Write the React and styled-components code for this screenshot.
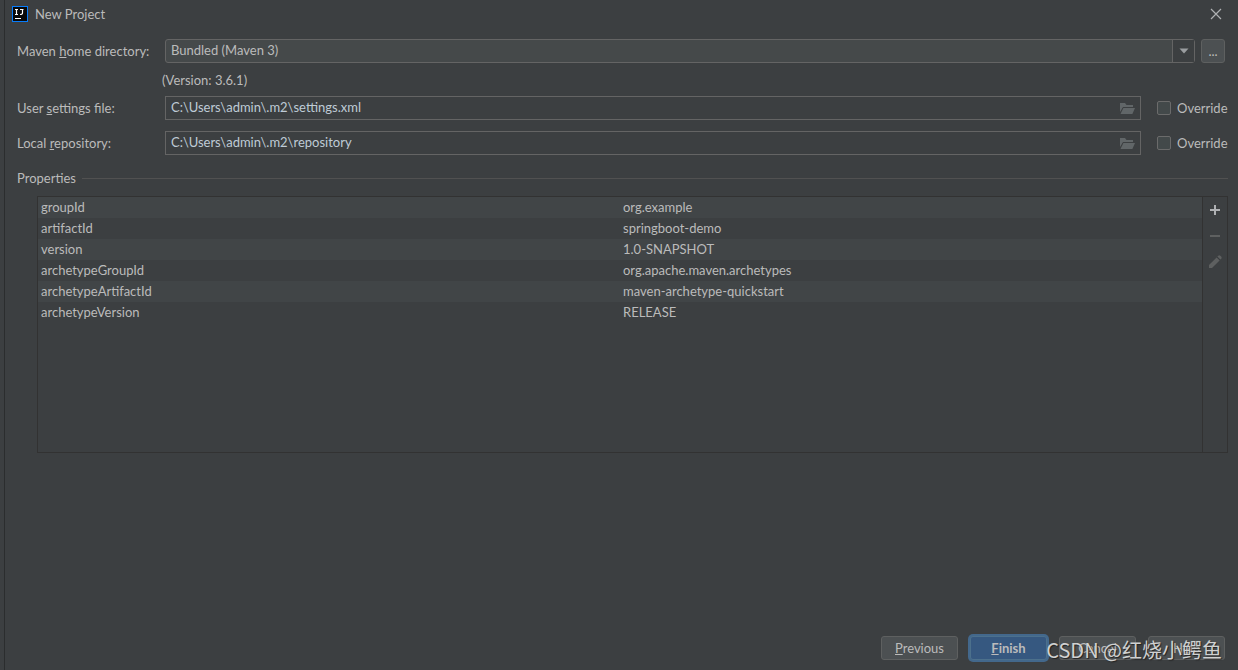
import React, {useState} from 'react';
import styled, {createGlobalStyle} from 'styled-components';

const GlobalStyle = createGlobalStyle`
  * {
    box-sizing: border-box;
  }

  body {
    margin: 0;
    background: #3c3f41;
    color: #bbbbbb;
    font: 13px/20px Lato, "Noto Sans CJK SC", sans-serif;
  }

  button, input, select {
    font: inherit;
    color: inherit;
  }
`;

const Dialog = styled.div`
  position: relative;
  display: flex;
  flex-direction: column;
  min-height: 100vh;
  margin-left: 4px;
  border-left: 1px solid #2b2d2e;
`;

const TitleBar = styled.header`
  display: flex;
  align-items: center;
  gap: 7px;
  height: 28px;
  padding: 0 14px 0 7px;
`;

const Title = styled.h1`
  flex: 1;
  margin: 0;
  font-size: 13px;
  font-weight: 400;
`;

const IconButton = styled.button`
  display: flex;
  padding: 0;
  border: 0;
  background: none;
  color: #afb1b3;

  &:disabled {
    color: #5e6060;
  }
`;

const Content = styled.main`
  flex: 1;
  padding: 11px 10px 0 12px;
`;

const FieldRow = styled.div`
  display: flex;
  align-items: center;
  height: 24px;
  margin-bottom: ${props => props.$gap || 11}px;
`;

const Label = styled.label`
  flex: 0 0 148px;
`;

const SelectBox = styled.div`
  display: grid;
  grid-template-columns: 1fr 22px;
  flex: 1;
  height: 24px;
  border: 1px solid #646464;
  border-radius: 3px;
  background: #45494a;
`;

const Select = styled.select`
  grid-area: 1 / 1 / 2 / 3;
  appearance: none;
  width: 100%;
  height: 22px;
  padding: 0 5px 2px;
  border: 0;
  outline: 0;
  background: none;
`;

const SelectArrow = styled.span`
  grid-area: 1 / 2 / 2 / 3;
  display: flex;
  align-items: center;
  justify-content: center;
  border-left: 1px solid #646464;
  background: #3c3f41;
  pointer-events: none;
`;

const Button = styled.button`
  width: 77px;
  height: 24px;
  padding: 0;
  border: 1px solid #5e6060;
  border-radius: 3px;
  background: #4c5052;
  line-height: 20px;
`;

const BrowseButton = styled(Button)`
  width: 24px;
  margin: 0 3px 0 6px;
`;

const DefaultButton = styled(Button)`
  border-color: #4c708c;
  background: #365880;
  box-shadow: 0 0 0 2px #43688c;
  font-weight: 700;
`;

const Version = styled.p`
  height: 20px;
  margin: 0 0 6px 145px;
`;

const PathBox = styled.div`
  display: flex;
  align-items: center;
  flex: 1;
  height: 24px;
  padding-right: 5px;
  border: 1px solid #646464;
  color: #616668;
`;

const PathInput = styled.input`
  flex: 1;
  min-width: 0;
  height: 22px;
  padding: 0 5px 2px;
  border: 0;
  outline: 0;
  background: none;
  color: #bfcbd6;
`;

const Override = styled.label`
  display: flex;
  align-items: center;
  gap: 6px;
  flex: 0 0 71px;
  margin-left: 16px;
`;

const CheckBox = styled.input`
  appearance: none;
  flex: none;
  width: 14px;
  height: 14px;
  margin: 0;
  border: 1px solid #6b6b6b;
  border-radius: 2px;
  background: #43494a;

  &:checked {
    background: #365880;
  }
`;

const SectionTitle = styled.h2`
  display: flex;
  align-items: center;
  gap: 6px;
  height: 20px;
  margin: 13px 0 8px;
  font-size: 13px;
  font-weight: 400;

  &::after {
    content: '';
    flex: 1;
    height: 1px;
    background: #515151;
  }
`;

const Panel = styled.section`
  display: flex;
  min-height: 257px;
  margin-left: 20px;
  border: 1px solid #323232;
`;

const TableArea = styled.div`
  flex: 1;
`;

const Table = styled.table`
  width: 100%;
  border-collapse: collapse;
  table-layout: fixed;

  tr:nth-child(odd) {
    background: #414547;
  }

  td {
    height: 21px;
    padding: 0 3px 1px;
  }
`;

const Toolbar = styled.div`
  display: flex;
  flex-direction: column;
  align-items: center;
  gap: 10px;
  width: 25px;
  padding-top: 5px;
  border-left: 1px solid #323232;
`;

const Footer = styled.footer`
  display: flex;
  justify-content: flex-end;
  gap: 12px;
  padding: 0 13px 10px;
`;

const Watermark = styled.div`
  position: absolute;
  right: 16px;
  bottom: 5px;
  color: #d0d1d1;
  font: 20px/30px "Noto Sans CJK SC", sans-serif;
  text-shadow: 1px 1px 1px #222222;
  pointer-events: none;
`;

function IdeaLogo() {
    return (
        <svg width="16" height="16" viewBox="0 0 16 16" aria-hidden="true">
            <rect x="0.5" y="0.5" width="15" height="15" fill="#080808" stroke="#087cfa"/>
            <path d="M3 3.5h3M4.5 3.5v5M3 8.5h3M8 3.5h3.5M10.5 3.5V7Q10.5 8.5 8 8.5" fill="none" stroke="#fff" strokeWidth="1.2"/>
            <path d="M3 12.5h6" stroke="#fff"/>
        </svg>
    );
}

function FolderIcon() {
    return (
        <svg width="16" height="16" viewBox="0 0 16 16" fill="currentColor" aria-hidden="true">
            <path d="M1 12V3h5l1.5 2H14v2H4z"/>
            <path d="M4.4 8H16l-2.6 6H1.5z"/>
        </svg>
    );
}

const properties = [
    {name: 'groupId', value: 'org.example'},
    {name: 'artifactId', value: 'springboot-demo'},
    {name: 'version', value: '1.0-SNAPSHOT'},
    {name: 'archetypeGroupId', value: 'org.apache.maven.archetypes'},
    {name: 'archetypeArtifactId', value: 'maven-archetype-quickstart'},
    {name: 'archetypeVersion', value: 'RELEASE'},
];

function PathField(props) {
    const [path, setPath] = useState(props.path);
    const [override, setOverride] = useState(false);

    return (
        <FieldRow>
            <Label htmlFor={props.id}>{props.children}</Label>
            <PathBox>
                <PathInput id={props.id} value={path} readOnly={!override} onChange={e => setPath(e.target.value)}/>
                <FolderIcon/>
            </PathBox>
            <Override>
                <CheckBox type="checkbox" checked={override} onChange={e => setOverride(e.target.checked)}/>
                Override
            </Override>
        </FieldRow>
    );
}

function App() {
    return (
        <Dialog>
            <GlobalStyle/>
            <TitleBar>
                <IdeaLogo/>
                <Title>New Project</Title>
                <IconButton aria-label="Close">
                    <svg width="16" height="16" viewBox="0 0 16 16" stroke="currentColor" strokeWidth="1.2">
                        <path d="M3 3l10 10M13 3L3 13"/>
                    </svg>
                </IconButton>
            </TitleBar>

            <Content>
                <FieldRow $gap={7}>
                    <Label htmlFor="maven-home">Maven <u>h</u>ome directory:</Label>
                    <SelectBox>
                        <Select id="maven-home">
                            <option>Bundled (Maven 3)</option>
                        </Select>
                        <SelectArrow>
                            <svg width="10" height="6" viewBox="0 0 10 6" fill="#9a9da0">
                                <path d="M0.5 0.5h9L5 5.5z"/>
                            </svg>
                        </SelectArrow>
                    </SelectBox>
                    <BrowseButton aria-label="Browse">...</BrowseButton>
                </FieldRow>
                <Version>(Version: 3.6.1)</Version>
                <PathField id="settings-file" path="C:\Users\admin\.m2\settings.xml">User <u>s</u>ettings file:</PathField>
                <PathField id="repository" path="C:\Users\admin\.m2\repository">Local <u>r</u>epository:</PathField>

                <SectionTitle>Properties</SectionTitle>
                <Panel>
                    <TableArea>
                        <Table>
                            <tbody>
                                {properties.map(item => (
                                    <tr key={item.name}>
                                        <td>{item.name}</td>
                                        <td>{item.value}</td>
                                    </tr>
                                ))}
                            </tbody>
                        </Table>
                    </TableArea>
                    <Toolbar>
                        <IconButton aria-label="Add">
                            <svg width="16" height="16" viewBox="0 0 16 16" stroke="currentColor" strokeWidth="2">
                                <path d="M3 8h10M8 3v10"/>
                            </svg>
                        </IconButton>
                        <IconButton aria-label="Remove" disabled>
                            <svg width="16" height="16" viewBox="0 0 16 16" stroke="currentColor" strokeWidth="2">
                                <path d="M3 8h10"/>
                            </svg>
                        </IconButton>
                        <IconButton aria-label="Edit" disabled>
                            <svg width="16" height="16" viewBox="0 0 16 16" fill="currentColor">
                                <path d="M2 11l7.6-7.6 3 3L5 14H2z"/>
                                <path d="M10.4 2.6l.9-.9q1-.8 2 0l1 1q.8 1 0 2l-.9.9z"/>
                            </svg>
                        </IconButton>
                    </Toolbar>
                </Panel>
            </Content>

            <Footer>
                <Button><u>P</u>revious</Button>
                <DefaultButton><u>F</u>inish</DefaultButton>
                <Button>Cancel</Button>
                <Button>Help</Button>
            </Footer>
            <Watermark>CSDN @红烧小鳄鱼</Watermark>
        </Dialog>
    );
}

export default App;
